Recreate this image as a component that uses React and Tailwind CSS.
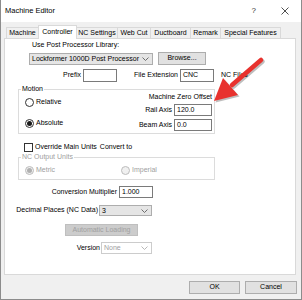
import React from "react";

const font = { fontFamily: '"Liberation Sans", Arial, sans-serif' };

function Chevron({ color = "#606060" }) {
  return (
    <svg width="7" height="4" viewBox="0 0 7 4" className="shrink-0">
      <path d="M0.5 0.5 L3.5 3.5 L6.5 0.5" fill="none" stroke={color} strokeWidth="0.9" />
    </svg>
  );
}

function Radio({ checked, disabled, label }) {
  return (
    <div className="flex items-center h-[10px] gap-[2px]">
      <div
        className={
          "w-[9px] h-[9px] rounded-full border flex items-center justify-center " +
          (disabled ? "border-[#bcbcbc] bg-[#f0f0f0]" : "border-[#333333] bg-white")
        }
      >
        {checked && (
          <div className={"w-[5px] h-[5px] rounded-full " + (disabled ? "bg-[#b0b0b0]" : "bg-[#1a1a1a]")} />
        )}
      </div>
      <span className={disabled ? "text-[#a0a0a0]" : "text-black"}>{label}</span>
    </div>
  );
}

function Input({ value, className }) {
  return (
    <div className={"h-[12px] border border-[#7a7a7a] bg-white px-[2px] leading-[10px] " + className}>{value}</div>
  );
}

function Tab({ label, w, selected }) {
  return (
    <div
      className={
        "border-t border-l border-r border-[#d9d9d9] -ml-px flex items-center justify-center " +
        (selected ? "h-[14px] mb-[-1px] bg-white relative z-10 px-0" : "h-[11px] bg-[#f0f0f0]")
      }
      style={{ width: w }}
    >
      {label}
    </div>
  );
}

export default function App() {
  return (
    <div
      className="w-[302px] h-[300px] bg-[#f0f0f0] border-x border-b border-[#8c8c8c] relative overflow-hidden text-[7px] text-black"
      style={font}
    >
      {/* title bar */}
      <div className="h-[22px] bg-white flex items-center pl-[4px] text-[7.5px]">
        <span>Machine Editor</span>
        <span className="ml-auto text-[8px] text-[#333]">?</span>
        <svg width="8" height="8" viewBox="0 0 8 8" className="ml-[25px] mr-[12px]">
          <path d="M0.5 0.5 L7.5 7.5 M7.5 0.5 L0.5 7.5" stroke="#222" strokeWidth="0.8" />
        </svg>
      </div>

      {/* tabs */}
      <div className="mt-[3px] ml-[6px] flex items-end h-[13px]">
        <Tab label="Machine" w={33} />
        <Tab label="Controller" w={39} selected />
        <Tab label="NC Settings" w={42} />
        <Tab label="Web Cut" w={34} />
        <Tab label="Ductboard" w={41} />
        <Tab label="Remark" w={31} />
        <Tab label="Special Features" w={61} />
      </div>

      {/* panel */}
      <div className="ml-[3px] w-[292px] h-[237px] bg-white border border-[#d9d9d9] flex flex-col">
        <div className="mt-[1px] h-[10px] leading-[10px] pl-[27px]">Use Post Processor Library:</div>

        <div className="mt-[2px] h-[13px] flex items-center">
          <div className="ml-[24px] w-[124px] h-[12px] bg-[#e5e5e5] border border-[#adadad] flex items-center pl-[2px] pr-[3px]">
            <span className="flex-1 leading-[10px]">Lockformer 1000D Post Processor</span>
            <Chevron />
          </div>
          <div className="ml-[5px] w-[48px] h-[13px] bg-[#e1e1e1] border border-[#adadad] flex items-center justify-center">
            Browse...
          </div>
        </div>

        <div className="mt-[4px] h-[13px] flex items-center">
          <div className="w-[76px] text-right">Prefix</div>
          <Input value="" className="ml-[2px] w-[34px] h-[13px]" />
          <div className="w-[61px] text-right">File Extension</div>
          <Input value="CNC" className="ml-[2px] w-[34px] h-[13px]" />
          <div className="ml-[7px]">NC Files</div>
        </div>

        {/* Motion group */}
        <div className="mt-[7px] ml-[13px] w-[197px] h-[45px] border border-[#dcdcdc] relative flex justify-between">
          <span className="absolute -top-[6px] left-[2px] px-[1px] bg-white leading-[10px]">Motion</span>
          <div className="pt-[7px] pl-[6px] flex flex-col gap-[11px]">
            <Radio label="Relative" />
            <Radio label="Absolute" checked />
          </div>
          <div className="pt-[2px] pr-[2px] flex flex-col items-end">
            <div className="h-[10px] leading-[10px]">Machine Zero Offset</div>
            <div className="mt-[2px] flex items-center gap-[2px]">
              <span>Rail Axis</span>
              <Input value="120.0" className="w-[38px]" />
            </div>
            <div className="mt-[3px] flex items-center gap-[2px]">
              <span>Beam Axis</span>
              <Input value="0.0" className="w-[38px]" />
            </div>
          </div>
        </div>

        <div className="mt-[8px] h-[10px] pl-[19px] flex items-center">
          <div className="w-[9px] h-[9px] border border-[#333333] bg-white" />
          <span className="ml-[2px]">Override Main Units</span>
          <span className="ml-[3px]">Convert to</span>
        </div>

        {/* NC Output Units group */}
        <div className="mt-[5px] ml-[13px] w-[197px] h-[23px] border border-[#dcdcdc] relative flex">
          <span className="absolute -top-[6px] left-[2px] px-[1px] bg-white leading-[10px] text-[#a0a0a0]">
            NC Output Units
          </span>
          <div className="pt-[7px] pl-[6px] w-[102px]">
            <Radio label="Metric" checked disabled />
          </div>
          <div className="pt-[7px]">
            <Radio label="Imperial" disabled />
          </div>
        </div>

        <div className="mt-[6px] h-[12px] flex items-center">
          <div className="w-[112px] text-right">Conversion Multiplier</div>
          <Input value="1.000" className="ml-[2px] w-[34px]" />
        </div>

        <div className="mt-[7px] h-[11px] flex items-center">
          <div className="w-[94px] text-right pr-[1px]">Decimal Places (NC Data)</div>
          <div className="w-[53px] h-[11px] bg-[#e5e5e5] border border-[#adadad] flex items-center pl-[2px] pr-[3px]">
            <span className="flex-1 leading-[9px]">3</span>
            <Chevron />
          </div>
        </div>

        <div className="mt-[8px] ml-[60px] w-[73px] h-[12px] bg-[#cccccc] border border-[#bfbfbf] flex items-center justify-center text-[#a0a0a0]">
          Automatic Loading
        </div>

        <div className="mt-[6px] h-[12px] flex items-center">
          <div className="w-[96px] text-right pr-[1px]">Version</div>
          <div className="w-[51px] h-[12px] bg-white border border-[#cccccc] flex items-center pl-[2px] pr-[3px] text-[#a0a0a0]">
            <span className="flex-1 leading-[10px]">None</span>
            <Chevron color="#b0b0b0" />
          </div>
        </div>
      </div>

      {/* buttons */}
      <div className="mt-[6px] flex justify-end gap-[5px] pr-[4px]">
        <div className="w-[51px] h-[13px] bg-[#e1e1e1] border border-[#adadad] flex items-center justify-center">OK</div>
        <div className="w-[52px] h-[13px] bg-[#e1e1e1] border border-[#adadad] flex items-center justify-center">Cancel</div>
      </div>

      {/* red callout arrow */}
      <svg className="absolute left-0 top-0 pointer-events-none" width="302" height="300" viewBox="0 0 302 300">
        <g opacity="0.25" transform="translate(1.5 1.5)">
          <line x1="260" y1="60" x2="231" y2="85" stroke="#000" strokeWidth="4.5" strokeLinecap="round" />
          <polygon points="213,101 237,95 222,78" fill="#000" />
        </g>
        <line x1="260" y1="60" x2="231" y2="85" stroke="#e8322e" strokeWidth="4.5" strokeLinecap="round" />
        <polygon points="213,101 237,95 222,78" fill="#e8322e" />
      </svg>
    </div>
  );
}
